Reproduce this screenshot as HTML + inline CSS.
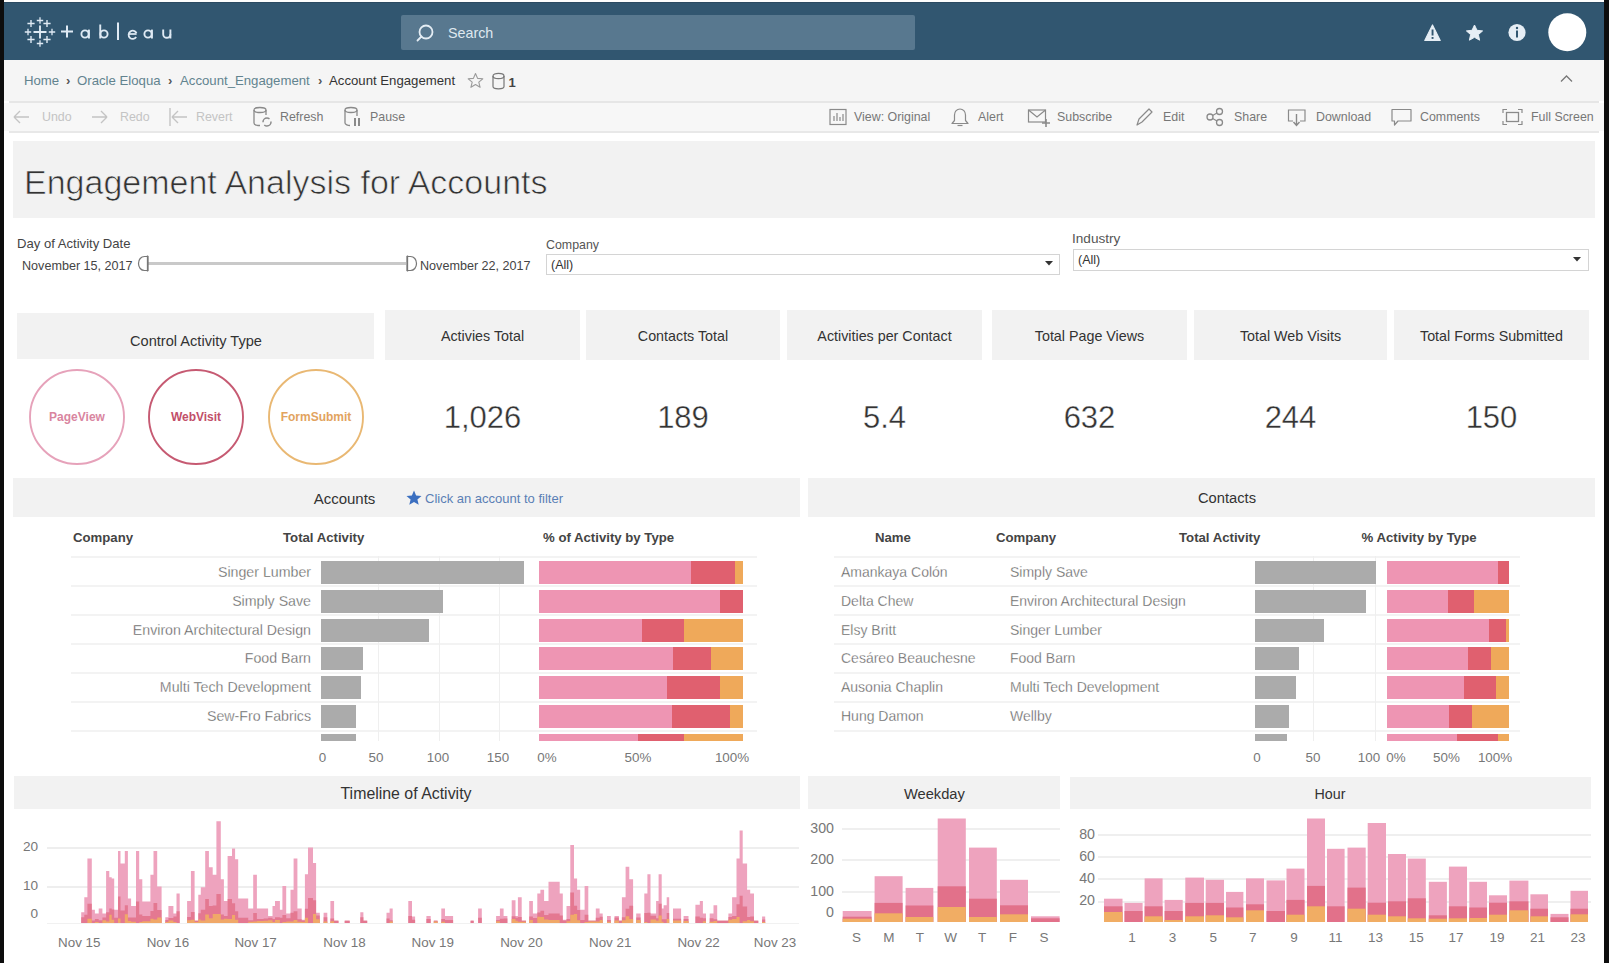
<!DOCTYPE html>
<html><head><meta charset="utf-8"><title>Engagement Analysis for Accounts</title>
<style>
html,body{margin:0;padding:0;width:1609px;height:963px;overflow:hidden;background:#fff;}
body{position:relative;font-family:'Liberation Sans', sans-serif;}
body>div{position:absolute;}
.t{white-space:nowrap;}
svg text{font-family:'Liberation Sans', sans-serif;}
</style></head><body>
<div style="left:0px;top:0px;width:1609px;height:963px;background:#ffffff;"></div>
<div style="left:4px;top:2px;width:1600px;height:58px;background:#315670;"></div>
<svg style="position:absolute;left:0;top:0" width="200" height="60" viewBox="0 0 200 60"><path d="M33.5 32H46.5M40 25.5V38.5" stroke="#dfeaf4" stroke-width="1.9" fill="none"/><path d="M36.8 20.5H43.2M40 17.3V23.7" stroke="#dfeaf4" stroke-width="1.3" fill="none"/><path d="M36.8 43.5H43.2M40 40.3V46.7" stroke="#dfeaf4" stroke-width="1.3" fill="none"/><path d="M24.8 32H31.2M28 28.8V35.2" stroke="#dfeaf4" stroke-width="1.3" fill="none"/><path d="M48.8 32H55.2M52 28.8V35.2" stroke="#dfeaf4" stroke-width="1.3" fill="none"/><path d="M27.4 23.5H34.6M31 19.9V27.1" stroke="#dfeaf4" stroke-width="1.4" fill="none"/><path d="M43.4 23.5H50.6M47 19.9V27.1" stroke="#dfeaf4" stroke-width="1.4" fill="none"/><path d="M27.4 39.5H34.6M31 35.9V43.1" stroke="#dfeaf4" stroke-width="1.4" fill="none"/><path d="M43.4 39.5H50.6M47 35.9V43.1" stroke="#dfeaf4" stroke-width="1.4" fill="none"/><path d="M61 31.5H73M67 25.5V37.5" stroke="#dfeaf4" stroke-width="2.0" fill="none"/><circle cx="85" cy="34" r="3.6" fill="none" stroke="#dfeaf4" stroke-width="1.9"/><rect x="88" y="29.6" width="1.9" height="8.9" fill="#dfeaf4"/><circle cx="104" cy="34" r="3.6" fill="none" stroke="#dfeaf4" stroke-width="1.9"/><rect x="99.3" y="24.5" width="1.9" height="14" fill="#dfeaf4"/><path d="M128.4 34H136.6" stroke="#dfeaf4" stroke-width="1.7"/><path d="M136.2 37A4.1 4.1 0 1 1 136.5 33.2" fill="none" stroke="#dfeaf4" stroke-width="1.8"/><circle cx="148" cy="34" r="3.6" fill="none" stroke="#dfeaf4" stroke-width="1.9"/><rect x="151" y="29.6" width="1.9" height="8.9" fill="#dfeaf4"/><path d="M163.2 29.5V34.2A3.6 3.6 0 0 0 170.4 34.2" fill="none" stroke="#dfeaf4" stroke-width="1.9"/><rect x="169.45" y="29.5" width="1.9" height="9" fill="#dfeaf4"/><rect x="117" y="22.5" width="2" height="17.5" fill="#dfeaf4"/></svg>
<div style="left:401px;top:15px;width:514px;height:35px;background:#58788f;border-radius:2px;"></div>
<svg style="position:absolute;left:414px;top:22px" width="22" height="22" viewBox="0 0 22 22"><circle cx="12" cy="10" r="6.5" stroke="#e4edf4" stroke-width="1.8" fill="none"/><path d="M7.5 14.5L3.5 18.5" stroke="#e4edf4" stroke-width="1.8" stroke-linecap="round"/></svg>
<div class="t" style="top:25.9px;font-size:14.3px;line-height:14.3px;color:#dfe8ef;left:448px;">Search</div>
<svg style="position:absolute;left:1420px;top:10px" width="180" height="46" viewBox="0 -10 180 46"><path d="M12.5 5L20.2 20.5H4.8Z" fill="#e6eef5" stroke="#e6eef5" stroke-width="1.2" stroke-linejoin="round"/><rect x="11.6" y="9.5" width="1.9" height="6" fill="#315670"/><rect x="11.6" y="17" width="1.9" height="1.9" fill="#315670"/><path d="M54.5 5L57 10.3L62.6 10.9L58.4 14.6L59.6 20.2L54.5 17.3L49.4 20.2L50.6 14.6L46.4 10.9L52 10.3Z" fill="#e6eef5" stroke="#e6eef5" stroke-width="1" stroke-linejoin="round"/><circle cx="97" cy="12.5" r="8.6" fill="#e6eef5"/><rect x="96" y="10.5" width="2" height="7" fill="#315670"/><circle cx="97" cy="8" r="1.2" fill="#315670"/><circle cx="147.3" cy="12.3" r="19" fill="#ffffff"/></svg>
<div style="left:4px;top:60px;width:1600px;height:41px;background:#f5f5f5;"></div>
<div style="left:9px;top:101px;width:1590px;height:2px;background:#e6e6e6;"></div>
<div class="t" style="top:73.83px;font-size:13.2px;line-height:13.2px;color:#62838f;left:24px;">Home</div>
<div class="t" style="top:74.0px;font-size:13px;line-height:13px;color:#555;font-weight:700;left:66px;">&#8250;</div>
<div class="t" style="top:73.83px;font-size:13.2px;line-height:13.2px;color:#62838f;left:77px;">Oracle Eloqua</div>
<div class="t" style="top:74.0px;font-size:13px;line-height:13px;color:#555;font-weight:700;left:168px;">&#8250;</div>
<div class="t" style="top:73.83px;font-size:13.2px;line-height:13.2px;color:#62838f;left:180px;">Account_Engagement</div>
<div class="t" style="top:74.0px;font-size:13px;line-height:13px;color:#555;font-weight:700;left:318px;">&#8250;</div>
<div class="t" style="top:73.83px;font-size:13.2px;line-height:13.2px;color:#333;left:329px;">Account Engagement</div>
<svg style="position:absolute;left:466px;top:71px" width="52" height="20" viewBox="0 0 52 20"><path d="M9.5 2.5L11.6 7.4L16.8 7.8L12.8 11.1L14.1 16.3L9.5 13.5L4.9 16.3L6.2 11.1L2.2 7.8L7.4 7.4Z" fill="none" stroke="#9a9a9a" stroke-width="1.1" stroke-linejoin="round"/><path d="M27 5V15.5C27 17 29.5 17.8 32.5 17.8S38 17 38 15.5V5" fill="none" stroke="#777" stroke-width="1.2"/><ellipse cx="32.5" cy="5" rx="5.5" ry="2.6" fill="none" stroke="#777" stroke-width="1.2"/></svg>
<div class="t" style="top:76.0px;font-size:13px;line-height:13px;color:#444;font-weight:700;left:508.5px;">1</div>
<svg style="position:absolute;left:1558px;top:73px" width="18" height="12" viewBox="0 0 18 12"><path d="M3 8.5L8.5 3L14 8.5" fill="none" stroke="#777" stroke-width="1.3"/></svg>
<div style="left:4px;top:103px;width:1600px;height:28px;background:#f7f7f7;"></div>
<div style="left:9px;top:131px;width:1590px;height:2px;background:#e8e8e8;"></div>
<div class="t" style="top:110.51px;font-size:12.4px;line-height:12.4px;color:#c4c4c4;left:42px;">Undo</div>
<div class="t" style="top:110.51px;font-size:12.4px;line-height:12.4px;color:#c4c4c4;left:120px;">Redo</div>
<div class="t" style="top:110.51px;font-size:12.4px;line-height:12.4px;color:#c4c4c4;left:196px;">Revert</div>
<div class="t" style="top:110.51px;font-size:12.4px;line-height:12.4px;color:#777777;left:280px;">Refresh</div>
<div class="t" style="top:110.51px;font-size:12.4px;line-height:12.4px;color:#777777;left:370px;">Pause</div>
<div class="t" style="top:110.51px;font-size:12.4px;line-height:12.4px;color:#777777;left:854px;">View: Original</div>
<div class="t" style="top:110.51px;font-size:12.4px;line-height:12.4px;color:#777777;left:978px;">Alert</div>
<div class="t" style="top:110.51px;font-size:12.4px;line-height:12.4px;color:#777777;left:1057px;">Subscribe</div>
<div class="t" style="top:110.51px;font-size:12.4px;line-height:12.4px;color:#777777;left:1163px;">Edit</div>
<div class="t" style="top:110.51px;font-size:12.4px;line-height:12.4px;color:#777777;left:1234px;">Share</div>
<div class="t" style="top:110.51px;font-size:12.4px;line-height:12.4px;color:#777777;left:1316px;">Download</div>
<div class="t" style="top:110.51px;font-size:12.4px;line-height:12.4px;color:#777777;left:1420px;">Comments</div>
<div class="t" style="top:110.51px;font-size:12.4px;line-height:12.4px;color:#777777;left:1531px;">Full Screen</div>
<svg style="position:absolute;left:0;top:103px" width="1609" height="28" viewBox="0 0 1609 28"><path d="M14 14H29M14 14L20 8M14 14L20 20" fill="none" stroke="#c4c4c4" stroke-width="1.4"/><path d="M92 14H107M107 14L101 8M107 14L101 20" fill="none" stroke="#c4c4c4" stroke-width="1.4"/><path d="M170 5V23M172 14H187M172 14L178 8M172 14L178 20" fill="none" stroke="#c4c4c4" stroke-width="1.4"/><path d="M254 7V20C254 21.5 257 22.5 260 22.5M266 7V12" fill="none" stroke="#8a8a8a" stroke-width="1.3"/><ellipse cx="260" cy="7" rx="6" ry="2.5" fill="none" stroke="#8a8a8a" stroke-width="1.3"/><circle cx="267" cy="19" r="4" fill="none" stroke="#8a8a8a" stroke-width="1.5" stroke-dasharray="9 3"/><path d="M345 7V20C345 21.5 348 22.5 350 22.5M357 7V13" fill="none" stroke="#8a8a8a" stroke-width="1.3"/><ellipse cx="351" cy="7" rx="6" ry="2.5" fill="none" stroke="#8a8a8a" stroke-width="1.3"/><rect x="354" y="15" width="2" height="8" fill="#8a8a8a"/><rect x="358" y="15" width="2" height="8" fill="#8a8a8a"/><rect x="830" y="6.5" width="16" height="15" fill="none" stroke="#8a8a8a" stroke-width="1.2"/><path d="M834 18V13M837 18V10M840 18V14M843 18V11" stroke="#8a8a8a" stroke-width="1.2"/><path d="M952 20.5H968L965.5 17.5V12C965.5 8.5 963 6 960 6S954.5 8.5 954.5 12V17.5Z" fill="none" stroke="#8a8a8a" stroke-width="1.2" stroke-linejoin="round"/><path d="M957.5 22.5H962.5" stroke="#8a8a8a" stroke-width="1.2"/><rect x="1028.5" y="7" width="17" height="12" fill="none" stroke="#8a8a8a" stroke-width="1.2"/><path d="M1028.5 7L1037 14L1045.5 7" fill="none" stroke="#8a8a8a" stroke-width="1.2"/><path d="M1046 16V24M1042 20H1050" stroke="#8a8a8a" stroke-width="1.6"/><path d="M1137 22L1139 16L1149 6L1152 9L1142 19Z" fill="none" stroke="#8a8a8a" stroke-width="1.2" stroke-linejoin="round"/><circle cx="1210" cy="14" r="3" fill="none" stroke="#8a8a8a" stroke-width="1.3"/><circle cx="1219.5" cy="8.5" r="3" fill="none" stroke="#8a8a8a" stroke-width="1.3"/><circle cx="1219.5" cy="19.5" r="3" fill="none" stroke="#8a8a8a" stroke-width="1.3"/><path d="M1212.6 12.5L1217 10M1212.6 15.5L1217 18" stroke="#8a8a8a" stroke-width="1.2"/><path d="M1293 18H1288.5V7H1305V18H1300" fill="none" stroke="#8a8a8a" stroke-width="1.2"/><path d="M1296.5 11V22M1293.5 19L1296.5 22.5L1299.5 19" fill="none" stroke="#8a8a8a" stroke-width="1.4"/><path d="M1392 6.5H1411V18H1398L1394.5 22V18H1392Z" fill="none" stroke="#8a8a8a" stroke-width="1.2" stroke-linejoin="round"/><rect x="1506.5" y="9.5" width="12" height="9" fill="none" stroke="#8a8a8a" stroke-width="1.3"/><path d="M1503 10V6.5H1507M1518 6.5H1522V10M1522 18V21.5H1518M1507 21.5H1503V18" fill="none" stroke="#8a8a8a" stroke-width="1.2"/></svg>
<div style="left:13px;top:141px;width:1582px;height:77px;background:#f2f2f2;"></div>
<div class="t" style="top:165.24px;font-size:34px;line-height:34px;color:#333;left:24px;-webkit-text-stroke:0.7px #f2f2f2;">Engagement Analysis for Accounts</div>
<div class="t" style="top:236.92px;font-size:13.1px;line-height:13.1px;color:#444;left:17px;">Day of Activity Date</div>
<div class="t" style="top:260.34px;font-size:12.6px;line-height:12.6px;color:#444;left:22px;">November 15, 2017</div>
<div style="left:148px;top:262px;width:258px;height:3px;background:#c9c9c9;"></div>
<svg style="position:absolute;left:136px;top:254px" width="290" height="20" viewBox="0 0 290 20"><path d="M12 2.5H8.5C5 2.5 2.5 5.5 2.5 9.5S5 16.5 8.5 16.5H12Z" fill="#fff" stroke="#777" stroke-width="1.2"/><path d="M11.5 1.5V17.5" stroke="#777" stroke-width="1.3"/><path d="M271 2.5H274.5C278 2.5 280.5 5.5 280.5 9.5S278 16.5 274.5 16.5H271Z" fill="#fff" stroke="#777" stroke-width="1.2"/><path d="M271.5 1.5V17.5" stroke="#777" stroke-width="1.3"/></svg>
<div class="t" style="top:260.34px;font-size:12.6px;line-height:12.6px;color:#444;left:420px;">November 22, 2017</div>
<div class="t" style="top:238.51px;font-size:12.4px;line-height:12.4px;color:#555;left:546px;">Company</div>
<div style="left:546px;top:254px;width:514px;height:21px;background:#fff;border:1px solid #d4d4d4;box-sizing:border-box;"></div>
<div class="t" style="top:259.43px;font-size:12.5px;line-height:12.5px;color:#333;left:551px;">(All)</div>
<svg style="position:absolute;left:1044px;top:260px" width="10" height="6"><path d="M1 1H9L5 5.5Z" fill="#333"/></svg>
<div class="t" style="top:232.49px;font-size:13.6px;line-height:13.6px;color:#555;left:1072px;">Industry</div>
<div style="left:1073px;top:249px;width:516px;height:22px;background:#fff;border:1px solid #d4d4d4;box-sizing:border-box;"></div>
<div class="t" style="top:254.43px;font-size:12.5px;line-height:12.5px;color:#333;left:1078px;">(All)</div>
<svg style="position:absolute;left:1572px;top:256px" width="10" height="6"><path d="M1 1H9L5 5.5Z" fill="#333"/></svg>
<div style="left:17px;top:313px;width:357px;height:46px;background:#f2f2f2;"></div>
<div class="t" style="top:333.65px;font-size:14.6px;line-height:14.6px;color:#333;left:-4.0px;width:400px;text-align:center;">Control Activity Type</div>
<div style="left:385px;top:310px;width:195px;height:50px;background:#f2f2f2;"></div>
<div class="t" style="top:328.9px;font-size:14.3px;line-height:14.3px;color:#333;left:282.5px;width:400px;text-align:center;">Activies Total</div>
<div class="t" style="top:401.77px;font-size:31px;line-height:31px;color:#333;left:282.5px;width:400px;text-align:center;-webkit-text-stroke:0.35px #fff;">1,026</div>
<div style="left:586px;top:310px;width:194px;height:50px;background:#f2f2f2;"></div>
<div class="t" style="top:328.9px;font-size:14.3px;line-height:14.3px;color:#333;left:483.0px;width:400px;text-align:center;">Contacts Total</div>
<div class="t" style="top:401.77px;font-size:31px;line-height:31px;color:#333;left:483.0px;width:400px;text-align:center;-webkit-text-stroke:0.35px #fff;">189</div>
<div style="left:787px;top:310px;width:195px;height:50px;background:#f2f2f2;"></div>
<div class="t" style="top:328.9px;font-size:14.3px;line-height:14.3px;color:#333;left:684.5px;width:400px;text-align:center;">Activities per Contact</div>
<div class="t" style="top:401.77px;font-size:31px;line-height:31px;color:#333;left:684.5px;width:400px;text-align:center;-webkit-text-stroke:0.35px #fff;">5.4</div>
<div style="left:992px;top:310px;width:195px;height:50px;background:#f2f2f2;"></div>
<div class="t" style="top:328.9px;font-size:14.3px;line-height:14.3px;color:#333;left:889.5px;width:400px;text-align:center;">Total Page Views</div>
<div class="t" style="top:401.77px;font-size:31px;line-height:31px;color:#333;left:889.5px;width:400px;text-align:center;-webkit-text-stroke:0.35px #fff;">632</div>
<div style="left:1194px;top:310px;width:193px;height:50px;background:#f2f2f2;"></div>
<div class="t" style="top:328.9px;font-size:14.3px;line-height:14.3px;color:#333;left:1090.5px;width:400px;text-align:center;">Total Web Visits</div>
<div class="t" style="top:401.77px;font-size:31px;line-height:31px;color:#333;left:1090.5px;width:400px;text-align:center;-webkit-text-stroke:0.35px #fff;">244</div>
<div style="left:1394px;top:310px;width:195px;height:50px;background:#f2f2f2;"></div>
<div class="t" style="top:328.9px;font-size:14.3px;line-height:14.3px;color:#333;left:1291.5px;width:400px;text-align:center;">Total Forms Submitted</div>
<div class="t" style="top:401.77px;font-size:31px;line-height:31px;color:#333;left:1291.5px;width:400px;text-align:center;-webkit-text-stroke:0.35px #fff;">150</div>
<svg style="position:absolute;left:28px;top:368px" width="98" height="98"><circle cx="49" cy="49" r="47" fill="none" stroke="#e6a2ba" stroke-width="1.9"/></svg>
<div class="t" style="top:411.35px;font-size:12px;line-height:12px;color:#d9859f;font-weight:700;left:-123.0px;width:400px;text-align:center;">PageView</div>
<svg style="position:absolute;left:147px;top:368px" width="98" height="98"><circle cx="49" cy="49" r="47" fill="none" stroke="#c65a72" stroke-width="1.9"/></svg>
<div class="t" style="top:411.35px;font-size:12px;line-height:12px;color:#c24f69;font-weight:700;left:-4.0px;width:400px;text-align:center;">WebVisit</div>
<svg style="position:absolute;left:267px;top:368px" width="98" height="98"><circle cx="49" cy="49" r="47" fill="none" stroke="#e9b873" stroke-width="1.9"/></svg>
<div class="t" style="top:411.35px;font-size:12px;line-height:12px;color:#e2a35e;font-weight:700;left:116.0px;width:400px;text-align:center;">FormSubmit</div>
<div style="left:13px;top:478px;width:787px;height:39px;background:#f2f2f2;"></div>
<div class="t" style="top:490.81px;font-size:15px;line-height:15px;color:#333;left:144.5px;width:400px;text-align:center;">Accounts</div>
<svg style="position:absolute;left:405px;top:489px" width="18" height="18" viewBox="0 0 18 18"><path d="M9 1.5L11.1 6.6L16.5 7L12.4 10.5L13.7 15.8L9 12.9L4.3 15.8L5.6 10.5L1.5 7L6.9 6.6Z" fill="#3b6fc0"/></svg>
<div class="t" style="top:492.0px;font-size:13px;line-height:13px;color:#5a7fb5;left:425px;">Click an account to filter</div>
<div style="left:808px;top:478px;width:787px;height:39px;background:#f2f2f2;"></div>
<div class="t" style="top:491.06px;font-size:14.7px;line-height:14.7px;color:#333;left:1027.0px;width:400px;text-align:center;">Contacts</div>
<div class="t" style="top:530.83px;font-size:13.2px;line-height:13.2px;color:#444;font-weight:700;left:73px;">Company</div>
<div class="t" style="top:530.83px;font-size:13.2px;line-height:13.2px;color:#444;font-weight:700;left:283px;">Total Activity</div>
<div class="t" style="top:530.83px;font-size:13.2px;line-height:13.2px;color:#444;font-weight:700;left:543px;">% of Activity by Type</div>
<div style="left:71px;top:556px;width:686px;height:185px;background:#f3f3f3;"></div>
<div style="left:71px;top:558px;width:686px;height:27px;background:#ffffff;"></div>
<div style="left:71px;top:587px;width:686px;height:27px;background:#ffffff;"></div>
<div style="left:71px;top:616px;width:686px;height:27px;background:#ffffff;"></div>
<div style="left:71px;top:645px;width:686px;height:27px;background:#ffffff;"></div>
<div style="left:71px;top:674px;width:686px;height:27px;background:#ffffff;"></div>
<div style="left:71px;top:703px;width:686px;height:27px;background:#ffffff;"></div>
<div style="left:71px;top:732px;width:686px;height:9px;background:#ffffff;"></div>
<div style="left:378px;top:556px;width:1px;height:185px;background:#efefef;"></div>
<div style="left:439px;top:556px;width:1px;height:185px;background:#efefef;"></div>
<div style="left:499px;top:556px;width:1px;height:185px;background:#efefef;"></div>
<div style="left:321px;top:561px;width:203px;height:23px;background:#ababab;"></div>
<div style="left:539px;top:561px;width:152px;height:23px;background:#ee95b3;"></div>
<div style="left:691px;top:561px;width:44px;height:23px;background:#e0606f;"></div>
<div style="left:735px;top:561px;width:8px;height:23px;background:#efa95a;"></div>
<div class="t" style="top:564.99px;font-size:14.2px;line-height:14.2px;color:#5a5a5a;left:51px;width:260px;text-align:right;-webkit-text-stroke:0.3px #fff;">Singer Lumber</div>
<div style="left:321px;top:590px;width:122px;height:23px;background:#ababab;"></div>
<div style="left:539px;top:590px;width:181px;height:23px;background:#ee95b3;"></div>
<div style="left:720px;top:590px;width:23px;height:23px;background:#e0606f;"></div>
<div style="left:743px;top:590px;width:0px;height:23px;background:#efa95a;"></div>
<div class="t" style="top:593.99px;font-size:14.2px;line-height:14.2px;color:#5a5a5a;left:51px;width:260px;text-align:right;-webkit-text-stroke:0.3px #fff;">Simply Save</div>
<div style="left:321px;top:619px;width:108px;height:23px;background:#ababab;"></div>
<div style="left:539px;top:619px;width:103px;height:23px;background:#ee95b3;"></div>
<div style="left:642px;top:619px;width:42px;height:23px;background:#e0606f;"></div>
<div style="left:684px;top:619px;width:59px;height:23px;background:#efa95a;"></div>
<div class="t" style="top:622.99px;font-size:14.2px;line-height:14.2px;color:#5a5a5a;left:51px;width:260px;text-align:right;-webkit-text-stroke:0.3px #fff;">Environ Architectural Design</div>
<div style="left:321px;top:647px;width:42px;height:23px;background:#ababab;"></div>
<div style="left:539px;top:647px;width:134px;height:23px;background:#ee95b3;"></div>
<div style="left:673px;top:647px;width:38px;height:23px;background:#e0606f;"></div>
<div style="left:711px;top:647px;width:32px;height:23px;background:#efa95a;"></div>
<div class="t" style="top:650.99px;font-size:14.2px;line-height:14.2px;color:#5a5a5a;left:51px;width:260px;text-align:right;-webkit-text-stroke:0.3px #fff;">Food Barn</div>
<div style="left:321px;top:676px;width:40px;height:23px;background:#ababab;"></div>
<div style="left:539px;top:676px;width:128px;height:23px;background:#ee95b3;"></div>
<div style="left:667px;top:676px;width:53px;height:23px;background:#e0606f;"></div>
<div style="left:720px;top:676px;width:23px;height:23px;background:#efa95a;"></div>
<div class="t" style="top:679.99px;font-size:14.2px;line-height:14.2px;color:#5a5a5a;left:51px;width:260px;text-align:right;-webkit-text-stroke:0.3px #fff;">Multi Tech Development</div>
<div style="left:321px;top:705px;width:35px;height:23px;background:#ababab;"></div>
<div style="left:539px;top:705px;width:133px;height:23px;background:#ee95b3;"></div>
<div style="left:672px;top:705px;width:58px;height:23px;background:#e0606f;"></div>
<div style="left:730px;top:705px;width:13px;height:23px;background:#efa95a;"></div>
<div class="t" style="top:708.99px;font-size:14.2px;line-height:14.2px;color:#5a5a5a;left:51px;width:260px;text-align:right;-webkit-text-stroke:0.3px #fff;">Sew-Fro Fabrics</div>
<div style="left:321px;top:734px;width:35px;height:6.5px;background:#ababab;"></div>
<div style="left:539px;top:734px;width:99px;height:6.5px;background:#ee95b3;"></div>
<div style="left:638px;top:734px;width:46px;height:6.5px;background:#e0606f;"></div>
<div style="left:684px;top:734px;width:59px;height:6.5px;background:#efa95a;"></div>
<div class="t" style="top:751.16px;font-size:13.4px;line-height:13.4px;color:#777;left:292.5px;width:60px;text-align:center;">0</div>
<div class="t" style="top:751.16px;font-size:13.4px;line-height:13.4px;color:#777;left:346.0px;width:60px;text-align:center;">50</div>
<div class="t" style="top:751.16px;font-size:13.4px;line-height:13.4px;color:#777;left:408.0px;width:60px;text-align:center;">100</div>
<div class="t" style="top:751.16px;font-size:13.4px;line-height:13.4px;color:#777;left:468.0px;width:60px;text-align:center;">150</div>
<div class="t" style="top:751.16px;font-size:13.4px;line-height:13.4px;color:#777;left:517.0px;width:60px;text-align:center;">0%</div>
<div class="t" style="top:751.16px;font-size:13.4px;line-height:13.4px;color:#777;left:608.0px;width:60px;text-align:center;">50%</div>
<div class="t" style="top:751.16px;font-size:13.4px;line-height:13.4px;color:#777;left:702.0px;width:60px;text-align:center;">100%</div>
<div class="t" style="top:530.83px;font-size:13.2px;line-height:13.2px;color:#444;font-weight:700;left:875px;">Name</div>
<div class="t" style="top:530.83px;font-size:13.2px;line-height:13.2px;color:#444;font-weight:700;left:996px;">Company</div>
<div class="t" style="top:530.83px;font-size:13.2px;line-height:13.2px;color:#444;font-weight:700;left:1179px;">Total Activity</div>
<div class="t" style="top:530.83px;font-size:13.2px;line-height:13.2px;color:#444;font-weight:700;left:1361.5px;">% Activity by Type</div>
<div style="left:834px;top:556px;width:686px;height:185px;background:#f3f3f3;"></div>
<div style="left:834px;top:558px;width:686px;height:27px;background:#ffffff;"></div>
<div style="left:834px;top:587px;width:686px;height:27px;background:#ffffff;"></div>
<div style="left:834px;top:616px;width:686px;height:27px;background:#ffffff;"></div>
<div style="left:834px;top:645px;width:686px;height:27px;background:#ffffff;"></div>
<div style="left:834px;top:674px;width:686px;height:27px;background:#ffffff;"></div>
<div style="left:834px;top:703px;width:686px;height:27px;background:#ffffff;"></div>
<div style="left:834px;top:732px;width:686px;height:9px;background:#ffffff;"></div>
<div style="left:1313px;top:556px;width:1px;height:185px;background:#efefef;"></div>
<div style="left:1375px;top:556px;width:1px;height:185px;background:#efefef;"></div>
<div style="left:1255px;top:561px;width:121px;height:23px;background:#ababab;"></div>
<div style="left:1387px;top:561px;width:111px;height:23px;background:#ee95b3;"></div>
<div style="left:1498px;top:561px;width:11px;height:23px;background:#e0606f;"></div>
<div class="t" style="top:565.16px;font-size:14px;line-height:14px;color:#5a5a5a;left:841px;-webkit-text-stroke:0.3px #fff;">Amankaya Col&oacute;n</div>
<div class="t" style="top:565.16px;font-size:14px;line-height:14px;color:#5a5a5a;left:1010px;-webkit-text-stroke:0.3px #fff;">Simply Save</div>
<div style="left:1255px;top:590px;width:111px;height:23px;background:#ababab;"></div>
<div style="left:1387px;top:590px;width:61px;height:23px;background:#ee95b3;"></div>
<div style="left:1448px;top:590px;width:26px;height:23px;background:#e0606f;"></div>
<div style="left:1474px;top:590px;width:35px;height:23px;background:#efa95a;"></div>
<div class="t" style="top:594.16px;font-size:14px;line-height:14px;color:#5a5a5a;left:841px;-webkit-text-stroke:0.3px #fff;">Delta Chew</div>
<div class="t" style="top:594.16px;font-size:14px;line-height:14px;color:#5a5a5a;left:1010px;-webkit-text-stroke:0.3px #fff;">Environ Architectural Design</div>
<div style="left:1255px;top:619px;width:69px;height:23px;background:#ababab;"></div>
<div style="left:1387px;top:619px;width:102px;height:23px;background:#ee95b3;"></div>
<div style="left:1489px;top:619px;width:17px;height:23px;background:#e0606f;"></div>
<div style="left:1506px;top:619px;width:3px;height:23px;background:#efa95a;"></div>
<div class="t" style="top:623.16px;font-size:14px;line-height:14px;color:#5a5a5a;left:841px;-webkit-text-stroke:0.3px #fff;">Elsy Britt</div>
<div class="t" style="top:623.16px;font-size:14px;line-height:14px;color:#5a5a5a;left:1010px;-webkit-text-stroke:0.3px #fff;">Singer Lumber</div>
<div style="left:1255px;top:647px;width:44px;height:23px;background:#ababab;"></div>
<div style="left:1387px;top:647px;width:81px;height:23px;background:#ee95b3;"></div>
<div style="left:1468px;top:647px;width:23px;height:23px;background:#e0606f;"></div>
<div style="left:1491px;top:647px;width:18px;height:23px;background:#efa95a;"></div>
<div class="t" style="top:651.16px;font-size:14px;line-height:14px;color:#5a5a5a;left:841px;-webkit-text-stroke:0.3px #fff;">Ces&aacute;reo Beauchesne</div>
<div class="t" style="top:651.16px;font-size:14px;line-height:14px;color:#5a5a5a;left:1010px;-webkit-text-stroke:0.3px #fff;">Food Barn</div>
<div style="left:1255px;top:676px;width:41px;height:23px;background:#ababab;"></div>
<div style="left:1387px;top:676px;width:77px;height:23px;background:#ee95b3;"></div>
<div style="left:1464px;top:676px;width:32px;height:23px;background:#e0606f;"></div>
<div style="left:1496px;top:676px;width:13px;height:23px;background:#efa95a;"></div>
<div class="t" style="top:680.16px;font-size:14px;line-height:14px;color:#5a5a5a;left:841px;-webkit-text-stroke:0.3px #fff;">Ausonia Chaplin</div>
<div class="t" style="top:680.16px;font-size:14px;line-height:14px;color:#5a5a5a;left:1010px;-webkit-text-stroke:0.3px #fff;">Multi Tech Development</div>
<div style="left:1255px;top:705px;width:34px;height:23px;background:#ababab;"></div>
<div style="left:1387px;top:705px;width:62px;height:23px;background:#ee95b3;"></div>
<div style="left:1449px;top:705px;width:23px;height:23px;background:#e0606f;"></div>
<div style="left:1472px;top:705px;width:37px;height:23px;background:#efa95a;"></div>
<div class="t" style="top:709.16px;font-size:14px;line-height:14px;color:#5a5a5a;left:841px;-webkit-text-stroke:0.3px #fff;">Hung Damon</div>
<div class="t" style="top:709.16px;font-size:14px;line-height:14px;color:#5a5a5a;left:1010px;-webkit-text-stroke:0.3px #fff;">Wellby</div>
<div style="left:1255px;top:734px;width:32px;height:6.5px;background:#ababab;"></div>
<div style="left:1387px;top:734px;width:70px;height:6.5px;background:#ee95b3;"></div>
<div style="left:1457px;top:734px;width:41px;height:6.5px;background:#e0606f;"></div>
<div style="left:1498px;top:734px;width:11px;height:6.5px;background:#efa95a;"></div>
<div class="t" style="top:751.16px;font-size:13.4px;line-height:13.4px;color:#777;left:1227.0px;width:60px;text-align:center;">0</div>
<div class="t" style="top:751.16px;font-size:13.4px;line-height:13.4px;color:#777;left:1283.0px;width:60px;text-align:center;">50</div>
<div class="t" style="top:751.16px;font-size:13.4px;line-height:13.4px;color:#777;left:1339.0px;width:60px;text-align:center;">100</div>
<div class="t" style="top:751.16px;font-size:13.4px;line-height:13.4px;color:#777;left:1366.0px;width:60px;text-align:center;">0%</div>
<div class="t" style="top:751.16px;font-size:13.4px;line-height:13.4px;color:#777;left:1416.5px;width:60px;text-align:center;">50%</div>
<div class="t" style="top:751.16px;font-size:13.4px;line-height:13.4px;color:#777;left:1465.0px;width:60px;text-align:center;">100%</div>
<div style="left:14px;top:776px;width:786px;height:33px;background:#f2f2f2;"></div>
<div class="t" style="top:786.05px;font-size:15.9px;line-height:15.9px;color:#333;left:206.0px;width:400px;text-align:center;">Timeline of Activity</div>
<div style="left:47px;top:847px;width:752px;height:2px;background:#eeeeee;"></div>
<div style="left:47px;top:886px;width:752px;height:2px;background:#eeeeee;"></div>
<div style="left:47px;top:923px;width:752px;height:1px;background:#f1f1f1;"></div>
<div class="t" style="top:840.49px;font-size:13.6px;line-height:13.6px;color:#777;left:-2px;width:40px;text-align:right;">20</div>
<div class="t" style="top:879.49px;font-size:13.6px;line-height:13.6px;color:#777;left:-2px;width:40px;text-align:right;">10</div>
<div class="t" style="top:907.49px;font-size:13.6px;line-height:13.6px;color:#777;left:-2px;width:40px;text-align:right;">0</div>
<div class="t" style="top:935.66px;font-size:13.4px;line-height:13.4px;color:#777;left:39.3px;width:80px;text-align:center;">Nov 15</div>
<div class="t" style="top:935.66px;font-size:13.4px;line-height:13.4px;color:#777;left:127.9px;width:80px;text-align:center;">Nov 16</div>
<div class="t" style="top:935.66px;font-size:13.4px;line-height:13.4px;color:#777;left:215.6px;width:80px;text-align:center;">Nov 17</div>
<div class="t" style="top:935.66px;font-size:13.4px;line-height:13.4px;color:#777;left:304.5px;width:80px;text-align:center;">Nov 18</div>
<div class="t" style="top:935.66px;font-size:13.4px;line-height:13.4px;color:#777;left:392.8px;width:80px;text-align:center;">Nov 19</div>
<div class="t" style="top:935.66px;font-size:13.4px;line-height:13.4px;color:#777;left:481.4px;width:80px;text-align:center;">Nov 20</div>
<div class="t" style="top:935.66px;font-size:13.4px;line-height:13.4px;color:#777;left:570.2px;width:80px;text-align:center;">Nov 21</div>
<div class="t" style="top:935.66px;font-size:13.4px;line-height:13.4px;color:#777;left:658.6px;width:80px;text-align:center;">Nov 22</div>
<div class="t" style="top:935.66px;font-size:13.4px;line-height:13.4px;color:#777;left:735.0px;width:80px;text-align:center;">Nov 23</div>
<svg style="position:absolute;left:0;top:800px" width="810" height="130" viewBox="0 800 810 130"><path d="M81.2 923V912.2H84.3V923ZM84.3 923V897.2H87.4V923ZM87.4 923V858.6H91.8V923ZM91.8 923V909.7H94.9V923ZM94.9 923V913.4H98.7V923ZM98.7 923V908.4H102.4V923ZM102.4 923V913.4H106.1V923ZM106.1 923V871.1H109.3V923ZM109.3 923V877.3H111.7V923ZM111.7 923V878.5H114.2V923ZM114.2 923V909.7H118.0V923ZM118.0 923V851.1H120.5V923ZM120.5 923V863.6H124.8V923ZM124.8 923V851.1H127.9V923ZM127.9 923V898.5H131.1V923ZM131.1 923V906.0H136.0V923ZM136.0 923V851.1H139.2V923ZM139.2 923V879.2H142.3V923ZM142.3 923V901.6H150.4V923ZM150.4 923V874.8H153.5V923ZM153.5 923V851.1H157.2V923ZM157.2 923V886.6H161.6V923ZM165.3 923V917.2H168.4V923ZM168.4 923V906.0H173.4V923ZM173.4 923V913.4H176.5V923ZM176.5 923V893.5H179.7V923ZM187.1 923V901.0H190.9V923ZM190.9 923V871.1H194.6V923ZM194.6 923V920.9H198.3V923ZM198.3 923V894.7H200.8V923ZM200.8 923V887.3H205.2V923ZM205.2 923V851.1H208.9V923ZM208.9 923V867.3H212.7V923ZM212.7 923V874.8H216.4V923ZM216.4 923V821.2H220.8V923ZM220.8 923V879.2H223.9V923ZM223.9 923V901.0H227.6V923ZM227.6 923V856.1H232.0V923ZM232.0 923V848.6H235.1V923ZM235.1 923V859.2H238.2V923ZM238.2 923V898.5H248.2V923ZM248.2 923V908.4H253.2V923ZM253.2 923V874.8H256.9V923ZM256.9 923V908.4H264.4V923ZM260.0 923V909.7H263.7V923ZM263.7 923V908.4H268.1V923ZM268.1 923V915.9H272.5V923ZM272.5 923V906.0H275.0V923ZM275.0 923V901.0H279.9V923ZM279.9 923V909.7H282.4V923ZM282.4 923V886.0H286.2V923ZM286.2 923V913.4H290.5V923ZM290.5 923V889.8H293.6V923ZM293.6 923V858.6H297.4V923ZM297.4 923V908.4H301.7V923ZM301.7 923V919.7H304.9V923ZM304.9 923V874.2H308.0V923ZM308.0 923V847.4H313.0V923ZM313.0 923V863.0H316.1V923ZM316.1 923V912.8H319.8V923ZM323.6 923V912.8H327.3V923ZM330.4 923V901.0H334.1V923ZM334.1 923V920.9H338.5V923ZM344.7 923V920.9H349.7V923ZM360.3 923V912.2H363.4V923ZM363.4 923V920.9H367.2V923ZM386.5 923V912.8H389.6V923ZM389.6 923V908.4H392.7V923ZM408.3 923V901.0H412.0V923ZM412.0 923V916.5H415.1V923ZM426.4 923V915.9H430.7V923ZM433.8 923V920.9H437.6V923ZM441.3 923V908.4H445.0V923ZM445.0 923V915.9H453.1V923ZM470.6 923V920.9H473.7V923ZM478.1 923V908.4H481.8V923ZM496.1 923V915.9H499.9V923ZM499.9 923V908.4H503.6V923ZM503.6 923V915.9H507.4V923ZM511.7 923V900.3H515.5V923ZM515.5 923V915.9H517.9V923ZM517.9 923V897.2H521.7V923ZM521.7 923V920.9H526.0V923ZM529.2 923V901.0H532.9V923ZM532.9 923V913.4H537.3V923ZM537.3 923V893.5H540.4V923ZM540.4 923V889.8H544.1V923ZM544.1 923V901.0H548.5V923ZM548.5 923V881.7H559.7V923ZM559.7 923V893.5H562.8V923ZM562.8 923V919.7H566.5V923ZM566.5 923V906.0H570.3V923ZM570.3 923V844.9H574.0V923ZM574.0 923V878.5H577.1V923ZM577.1 923V889.8H580.2V923ZM580.2 923V909.7H584.6V923ZM584.6 923V886.0H588.3V923ZM588.3 923V920.9H595.8V923ZM595.8 923V908.4H599.6V923ZM599.6 923V913.4H602.7V923ZM607.0 923V915.9H610.8V923ZM614.5 923V915.9H618.9V923ZM618.9 923V920.9H622.0V923ZM621.9 923V897.2H625.6V923ZM625.6 923V866.7H629.3V923ZM629.3 923V879.2H633.1V923ZM636.2 923V913.4H640.6V923ZM644.3 923V893.5H647.4V923ZM647.4 923V874.2H650.5V923ZM650.5 923V913.4H656.1V923ZM656.1 923V901.0H658.6V923ZM658.6 923V874.2H661.7V923ZM661.7 923V908.4H663.6V923ZM663.6 923V905.3H666.7V923ZM666.7 923V897.2H669.2V923ZM673.0 923V908.4H681.1V923ZM683.6 923V915.9H688.5V923ZM695.4 923V904.7H699.8V923ZM699.8 923V901.0H702.9V923ZM702.9 923V913.4H706.0V923ZM709.7 923V913.4H713.5V923ZM713.5 923V905.3H717.2V923ZM717.2 923V920.9H728.4V923ZM728.4 923V913.4H732.1V923ZM732.1 923V897.2H736.5V923ZM736.5 923V858.6H739.6V923ZM739.6 923V830.6H742.7V923ZM742.7 923V863.6H747.1V923ZM747.1 923V889.8H750.2V923ZM750.2 923V893.5H754.0V923ZM754.0 923V920.9H758.3V923ZM762.1 923V916.5H765.2V923Z" fill="#eea3be"/><path d="M81.2 923V917.3H84.3V923ZM84.3 923V914.7H87.4V923ZM87.4 923V903.8H91.8V923ZM91.8 923V920.4H94.9V923ZM94.9 923V919.0H98.7V923ZM98.7 923V920.2H102.4V923ZM102.4 923V917.5H106.1V923ZM106.1 923V912.2H109.3V923ZM109.3 923V908.5H111.7V923ZM111.7 923V909.4H114.2V923ZM114.2 923V917.7H118.0V923ZM118.0 923V896.5H120.5V923ZM120.5 923V910.4H124.8V923ZM124.8 923V905.2H127.9V923ZM127.9 923V917.6H131.1V923ZM131.1 923V917.5H136.0V923ZM136.0 923V901.4H139.2V923ZM139.2 923V914.5H142.3V923ZM142.3 923V915.9H150.4V923ZM150.4 923V911.0H153.5V923ZM153.5 923V902.9H157.2V923ZM157.2 923V910.1H161.6V923ZM165.3 923V920.1H168.4V923ZM168.4 923V918.0H173.4V923ZM173.4 923V916.4H176.5V923ZM176.5 923V911.3H179.7V923ZM187.1 923V917.0H190.9V923ZM190.9 923V911.9H194.6V923ZM194.6 923V920.5H198.3V923ZM198.3 923V913.2H200.8V923ZM200.8 923V909.7H205.2V923ZM205.2 923V899.1H208.9V923ZM208.9 923V905.9H212.7V923ZM212.7 923V905.4H216.4V923ZM216.4 923V894.1H220.8V923ZM220.8 923V914.5H223.9V923ZM223.9 923V915.9H227.6V923ZM227.6 923V898.9H232.0V923ZM232.0 923V903.3H235.1V923ZM235.1 923V911.2H238.2V923ZM238.2 923V917.7H248.2V923ZM248.2 923V920.2H253.2V923ZM253.2 923V913.0H256.9V923ZM256.9 923V919.1H264.4V923ZM260.0 923V920.4H263.7V923ZM263.7 923V918.6H268.1V923ZM268.1 923V917.8H272.5V923ZM272.5 923V918.9H275.0V923ZM275.0 923V917.3H279.9V923ZM279.9 923V917.8H282.4V923ZM282.4 923V914.9H286.2V923ZM286.2 923V918.3H290.5V923ZM290.5 923V912.7H293.6V923ZM293.6 923V911.3H297.4V923ZM297.4 923V919.2H301.7V923ZM301.7 923V920.4H304.9V923ZM304.9 923V908.7H308.0V923ZM308.0 923V898.1H313.0V923ZM313.0 923V900.3H316.1V923ZM316.1 923V915.4H319.8V923ZM323.6 923V917.3H327.3V923ZM330.4 923V918.5H334.1V923ZM334.1 923V920.5H338.5V923ZM344.7 923V920.5H349.7V923ZM360.3 923V917.2H363.4V923ZM363.4 923V920.5H367.2V923ZM386.5 923V918.5H389.6V923ZM389.6 923V920.3H392.7V923ZM408.3 923V916.1H412.0V923ZM412.0 923V919.8H415.1V923ZM426.4 923V919.1H430.7V923ZM433.8 923V920.5H437.6V923ZM441.3 923V918.9H445.0V923ZM445.0 923V919.9H453.1V923ZM470.6 923V920.5H473.7V923ZM478.1 923V917.7H481.8V923ZM496.1 923V920.1H499.9V923ZM499.9 923V918.7H503.6V923ZM503.6 923V918.6H507.4V923ZM511.7 923V916.3H515.5V923ZM515.5 923V917.7H517.9V923ZM517.9 923V916.9H521.7V923ZM521.7 923V920.5H526.0V923ZM529.2 923V916.5H532.9V923ZM532.9 923V917.9H537.3V923ZM537.3 923V912.4H540.4V923ZM540.4 923V910.8H544.1V923ZM544.1 923V915.1H548.5V923ZM548.5 923V913.5H559.7V923ZM559.7 923V915.4H562.8V923ZM562.8 923V920.5H566.5V923ZM566.5 923V919.0H570.3V923ZM570.3 923V892.5H574.0V923ZM574.0 923V905.8H577.1V923ZM577.1 923V910.0H580.2V923ZM580.2 923V920.0H584.6V923ZM584.6 923V914.7H588.3V923ZM588.3 923V920.5H595.8V923ZM595.8 923V917.7H599.6V923ZM599.6 923V916.7H602.7V923ZM607.0 923V919.9H610.8V923ZM614.5 923V917.6H618.9V923ZM618.9 923V920.5H622.0V923ZM621.9 923V917.3H625.6V923ZM625.6 923V908.7H629.3V923ZM629.3 923V905.7H633.1V923ZM636.2 923V917.6H640.6V923ZM644.3 923V913.0H647.4V923ZM647.4 923V912.8H650.5V923ZM650.5 923V915.7H656.1V923ZM656.1 923V918.3H658.6V923ZM658.6 923V903.7H661.7V923ZM661.7 923V919.3H663.6V923ZM663.6 923V919.3H666.7V923ZM666.7 923V912.9H669.2V923ZM673.0 923V918.7H681.1V923ZM683.6 923V918.9H688.5V923ZM695.4 923V916.4H699.8V923ZM699.8 923V917.8H702.9V923ZM702.9 923V918.2H706.0V923ZM709.7 923V918.2H713.5V923ZM713.5 923V919.3H717.2V923ZM717.2 923V920.5H728.4V923ZM728.4 923V916.9H732.1V923ZM732.1 923V916.0H736.5V923ZM736.5 923V904.3H739.6V923ZM739.6 923V895.7H742.7V923ZM742.7 923V906.6H747.1V923ZM747.1 923V917.0H750.2V923ZM750.2 923V916.6H754.0V923ZM754.0 923V920.5H758.3V923ZM762.1 923V919.6H765.2V923Z" fill="#e2718a" fill-opacity="0.85"/><path d="M87.4 923V918.8H91.8V923ZM94.9 923V922.0H98.7V923ZM102.4 923V920.3H106.1V923ZM106.1 923V921.6H109.3V923ZM109.3 923V914.7H111.7V923ZM111.7 923V919.8H114.2V923ZM118.0 923V918.4H120.5V923ZM124.8 923V914.3H127.9V923ZM127.9 923V921.1H131.1V923ZM131.1 923V921.8H136.0V923ZM139.2 923V922.0H142.3V923ZM142.3 923V921.2H150.4V923ZM150.4 923V918.8H153.5V923ZM153.5 923V919.4H157.2V923ZM157.2 923V917.6H161.6V923ZM165.3 923V922.0H168.4V923ZM168.4 923V920.4H173.4V923ZM173.4 923V921.9H176.5V923ZM187.1 923V920.3H190.9V923ZM190.9 923V919.7H194.6V923ZM194.6 923V922.0H198.3V923ZM198.3 923V919.6H200.8V923ZM200.8 923V920.5H205.2V923ZM205.2 923V914.5H208.9V923ZM208.9 923V918.3H212.7V923ZM212.7 923V914.0H216.4V923ZM216.4 923V914.0H220.8V923ZM220.8 923V919.4H223.9V923ZM223.9 923V918.8H227.6V923ZM227.6 923V918.9H232.0V923ZM232.0 923V915.1H235.1V923ZM235.1 923V919.7H238.2V923ZM248.2 923V921.7H253.2V923ZM253.2 923V921.5H256.9V923ZM256.9 923V921.0H264.4V923ZM263.7 923V920.7H268.1V923ZM268.1 923V920.3H272.5V923ZM272.5 923V922.0H275.0V923ZM275.0 923V920.0H279.9V923ZM282.4 923V921.9H286.2V923ZM286.2 923V921.6H290.5V923ZM290.5 923V921.4H293.6V923ZM293.6 923V920.1H297.4V923ZM297.4 923V921.7H301.7V923ZM301.7 923V921.9H304.9V923ZM304.9 923V917.7H308.0V923ZM313.0 923V914.0H316.1V923ZM316.1 923V919.3H319.8V923ZM323.6 923V921.6H327.3V923ZM330.4 923V921.3H334.1V923ZM389.6 923V921.6H392.7V923ZM433.8 923V921.5H437.6V923ZM441.3 923V921.8H445.0V923ZM496.1 923V921.3H499.9V923ZM511.7 923V919.1H515.5V923ZM515.5 923V920.8H517.9V923ZM517.9 923V921.7H521.7V923ZM521.7 923V921.8H526.0V923ZM529.2 923V919.9H532.9V923ZM537.3 923V916.7H540.4V923ZM540.4 923V917.1H544.1V923ZM544.1 923V919.5H548.5V923ZM548.5 923V920.0H559.7V923ZM566.5 923V921.3H570.3V923ZM570.3 923V914.8H574.0V923ZM574.0 923V914.0H577.1V923ZM577.1 923V920.2H580.2V923ZM584.6 923V922.0H588.3V923ZM588.3 923V921.6H595.8V923ZM595.8 923V921.5H599.6V923ZM599.6 923V920.0H602.7V923ZM607.0 923V921.8H610.8V923ZM614.5 923V920.5H618.9V923ZM621.9 923V920.3H625.6V923ZM625.6 923V916.2H629.3V923ZM629.3 923V918.9H633.1V923ZM636.2 923V920.0H640.6V923ZM644.3 923V922.0H647.4V923ZM650.5 923V919.5H656.1V923ZM656.1 923V920.7H658.6V923ZM658.6 923V915.4H661.7V923ZM661.7 923V921.8H663.6V923ZM666.7 923V919.0H669.2V923ZM673.0 923V920.6H681.1V923ZM683.6 923V920.9H688.5V923ZM702.9 923V921.3H706.0V923ZM709.7 923V921.8H713.5V923ZM713.5 923V921.0H717.2V923ZM728.4 923V919.7H732.1V923ZM732.1 923V919.1H736.5V923ZM736.5 923V917.0H739.6V923ZM742.7 923V921.2H747.1V923ZM747.1 923V920.1H750.2V923ZM750.2 923V921.2H754.0V923ZM762.1 923V921.9H765.2V923Z" fill="#f1ad64" fill-opacity="0.9"/></svg>
<div style="left:1070px;top:777px;width:521px;height:32px;background:#f2f2f2;"></div>
<div style="left:1098px;top:834px;width:493px;height:2px;background:#efefef;"></div>
<div style="left:1098px;top:856px;width:493px;height:2px;background:#efefef;"></div>
<div style="left:1098px;top:878px;width:493px;height:2px;background:#efefef;"></div>
<div style="left:1098px;top:901px;width:493px;height:2px;background:#efefef;"></div>
<div style="left:808px;top:776px;width:252px;height:33px;background:#f2f2f2;"></div>
<div class="t" style="top:786.56px;font-size:14.7px;line-height:14.7px;color:#333;left:734.4px;width:400px;text-align:center;">Weekday</div>
<div style="left:842px;top:828px;width:218px;height:2px;background:#efefef;"></div>
<div style="left:842px;top:859px;width:218px;height:2px;background:#efefef;"></div>
<div style="left:842px;top:891px;width:218px;height:2px;background:#efefef;"></div>
<div class="t" style="top:820.99px;font-size:14.2px;line-height:14.2px;color:#777;left:794px;width:40px;text-align:right;">300</div>
<div class="t" style="top:851.99px;font-size:14.2px;line-height:14.2px;color:#777;left:794px;width:40px;text-align:right;">200</div>
<div class="t" style="top:883.99px;font-size:14.2px;line-height:14.2px;color:#777;left:794px;width:40px;text-align:right;">100</div>
<div class="t" style="top:904.99px;font-size:14.2px;line-height:14.2px;color:#777;left:794px;width:40px;text-align:right;">0</div>
<svg style="position:absolute;left:0;top:0" width="1609" height="963"><rect x="842.7" y="911" width="28.9" height="11.0" fill="#eea3be"/><rect x="842.7" y="916.7" width="28.9" height="5.3" fill="#e2718a"/><rect x="842.7" y="918.7" width="28.9" height="3.3" fill="#f1ad64"/><rect x="874.6" y="876.2" width="28.0" height="45.8" fill="#eea3be"/><rect x="874.6" y="902.9" width="28.0" height="19.1" fill="#e2718a"/><rect x="874.6" y="913.3" width="28.0" height="8.7" fill="#f1ad64"/><rect x="905.6" y="887.9" width="27.7" height="34.1" fill="#eea3be"/><rect x="905.6" y="905.5" width="27.7" height="16.5" fill="#e2718a"/><rect x="905.6" y="917" width="27.7" height="5.0" fill="#f1ad64"/><rect x="937.7" y="818.5" width="28.1" height="103.5" fill="#eea3be"/><rect x="937.7" y="886.3" width="28.1" height="35.7" fill="#e2718a"/><rect x="937.7" y="907" width="28.1" height="15.0" fill="#f1ad64"/><rect x="969" y="847.6" width="27.8" height="74.4" fill="#eea3be"/><rect x="969" y="898.7" width="27.8" height="23.3" fill="#e2718a"/><rect x="969" y="917" width="27.8" height="5.0" fill="#f1ad64"/><rect x="1000" y="879.8" width="28.0" height="42.2" fill="#eea3be"/><rect x="1000" y="905.3" width="28.0" height="16.7" fill="#e2718a"/><rect x="1000" y="914.3" width="28.0" height="7.7" fill="#f1ad64"/><rect x="1031" y="916.3" width="28.6" height="5.7" fill="#eea3be"/><rect x="1031" y="918.3" width="28.6" height="3.7" fill="#e2718a"/><rect x="1104" y="898.7" width="18.5" height="23.3" fill="#eea3be"/><rect x="1104" y="906.3" width="18.5" height="15.7" fill="#e2718a"/><rect x="1104" y="912" width="18.5" height="10.0" fill="#f1ad64"/><rect x="1124.5" y="902.9" width="18.1" height="19.1" fill="#eea3be"/><rect x="1124.5" y="911" width="18.1" height="11.0" fill="#e2718a"/><rect x="1144.6" y="878.4" width="18.0" height="43.6" fill="#eea3be"/><rect x="1144.6" y="906.3" width="18.0" height="15.7" fill="#e2718a"/><rect x="1144.6" y="916.3" width="18.0" height="5.7" fill="#f1ad64"/><rect x="1164.6" y="899.9" width="18.1" height="22.1" fill="#eea3be"/><rect x="1164.6" y="911" width="18.1" height="11.0" fill="#e2718a"/><rect x="1164.6" y="920" width="18.1" height="2.0" fill="#f1ad64"/><rect x="1185.3" y="877.6" width="18.7" height="44.4" fill="#eea3be"/><rect x="1185.3" y="902.9" width="18.7" height="19.1" fill="#e2718a"/><rect x="1185.3" y="916.3" width="18.7" height="5.7" fill="#f1ad64"/><rect x="1205.7" y="879.8" width="18.3" height="42.2" fill="#eea3be"/><rect x="1205.7" y="902.9" width="18.3" height="19.1" fill="#e2718a"/><rect x="1205.7" y="915.3" width="18.3" height="6.7" fill="#f1ad64"/><rect x="1226" y="891.9" width="17.4" height="30.1" fill="#eea3be"/><rect x="1226" y="907.5" width="17.4" height="14.5" fill="#e2718a"/><rect x="1226" y="917.3" width="17.4" height="4.7" fill="#f1ad64"/><rect x="1246" y="878.4" width="18.0" height="43.6" fill="#eea3be"/><rect x="1246" y="904.3" width="18.0" height="17.7" fill="#e2718a"/><rect x="1246" y="910.3" width="18.0" height="11.7" fill="#f1ad64"/><rect x="1266.5" y="880.4" width="18.5" height="41.6" fill="#eea3be"/><rect x="1266.5" y="911" width="18.5" height="11.0" fill="#e2718a"/><rect x="1286.5" y="868.6" width="18.0" height="53.4" fill="#eea3be"/><rect x="1286.5" y="899.9" width="18.0" height="22.1" fill="#e2718a"/><rect x="1286.5" y="914.7" width="18.0" height="7.3" fill="#f1ad64"/><rect x="1307" y="818.5" width="18.0" height="103.5" fill="#eea3be"/><rect x="1307" y="885.9" width="18.0" height="36.1" fill="#e2718a"/><rect x="1307" y="906.3" width="18.0" height="15.7" fill="#f1ad64"/><rect x="1327" y="848.8" width="17.6" height="73.2" fill="#eea3be"/><rect x="1327" y="906.3" width="17.6" height="15.7" fill="#e2718a"/><rect x="1347.5" y="847.6" width="18.2" height="74.4" fill="#eea3be"/><rect x="1347.5" y="887.6" width="18.2" height="34.4" fill="#e2718a"/><rect x="1347.5" y="908.7" width="18.2" height="13.3" fill="#f1ad64"/><rect x="1367.7" y="823" width="18.3" height="99.0" fill="#eea3be"/><rect x="1367.7" y="902.7" width="18.3" height="19.3" fill="#e2718a"/><rect x="1367.7" y="914.7" width="18.3" height="7.3" fill="#f1ad64"/><rect x="1388" y="854" width="18.0" height="68.0" fill="#eea3be"/><rect x="1388" y="901.3" width="18.0" height="20.7" fill="#e2718a"/><rect x="1388" y="916.3" width="18.0" height="5.7" fill="#f1ad64"/><rect x="1407.8" y="858.6" width="18.0" height="63.4" fill="#eea3be"/><rect x="1407.8" y="898.3" width="18.0" height="23.7" fill="#e2718a"/><rect x="1407.8" y="918.3" width="18.0" height="3.7" fill="#f1ad64"/><rect x="1428.8" y="881.8" width="18.1" height="40.2" fill="#eea3be"/><rect x="1428.8" y="915.3" width="18.1" height="6.7" fill="#e2718a"/><rect x="1428.8" y="918.7" width="18.1" height="3.3" fill="#f1ad64"/><rect x="1448.9" y="866.6" width="18.1" height="55.4" fill="#eea3be"/><rect x="1448.9" y="906.3" width="18.1" height="15.7" fill="#e2718a"/><rect x="1448.9" y="918.3" width="18.1" height="3.7" fill="#f1ad64"/><rect x="1469.3" y="881.8" width="17.7" height="40.2" fill="#eea3be"/><rect x="1469.3" y="907.5" width="17.7" height="14.5" fill="#e2718a"/><rect x="1469.3" y="918" width="17.7" height="4.0" fill="#f1ad64"/><rect x="1489" y="895.3" width="18.0" height="26.7" fill="#eea3be"/><rect x="1489" y="902.7" width="18.0" height="19.3" fill="#e2718a"/><rect x="1489" y="914.7" width="18.0" height="7.3" fill="#f1ad64"/><rect x="1509.4" y="880.6" width="19.0" height="41.4" fill="#eea3be"/><rect x="1509.4" y="901.3" width="19.0" height="20.7" fill="#e2718a"/><rect x="1509.4" y="910.3" width="19.0" height="11.7" fill="#f1ad64"/><rect x="1530.4" y="894.3" width="17.6" height="27.7" fill="#eea3be"/><rect x="1530.4" y="908.7" width="17.6" height="13.3" fill="#e2718a"/><rect x="1530.4" y="916.3" width="17.6" height="5.7" fill="#f1ad64"/><rect x="1550.5" y="913.9" width="18.0" height="8.1" fill="#eea3be"/><rect x="1550.5" y="917.3" width="18.0" height="4.7" fill="#e2718a"/><rect x="1570.5" y="890.8" width="17.5" height="31.2" fill="#eea3be"/><rect x="1570.5" y="908.7" width="17.5" height="13.3" fill="#e2718a"/><rect x="1570.5" y="914.3" width="17.5" height="7.7" fill="#f1ad64"/></svg>
<div class="t" style="top:930.58px;font-size:13.5px;line-height:13.5px;color:#777;left:841.5px;width:30px;text-align:center;">S</div>
<div class="t" style="top:930.58px;font-size:13.5px;line-height:13.5px;color:#777;left:873.8px;width:30px;text-align:center;">M</div>
<div class="t" style="top:930.58px;font-size:13.5px;line-height:13.5px;color:#777;left:904.9px;width:30px;text-align:center;">T</div>
<div class="t" style="top:930.58px;font-size:13.5px;line-height:13.5px;color:#777;left:935.7px;width:30px;text-align:center;">W</div>
<div class="t" style="top:930.58px;font-size:13.5px;line-height:13.5px;color:#777;left:967.0px;width:30px;text-align:center;">T</div>
<div class="t" style="top:930.58px;font-size:13.5px;line-height:13.5px;color:#777;left:997.9px;width:30px;text-align:center;">F</div>
<div class="t" style="top:930.58px;font-size:13.5px;line-height:13.5px;color:#777;left:1029.0px;width:30px;text-align:center;">S</div>
<div class="t" style="top:786.9px;font-size:14.3px;line-height:14.3px;color:#333;left:1130.0px;width:400px;text-align:center;">Hour</div>
<div class="t" style="top:826.99px;font-size:14.2px;line-height:14.2px;color:#777;left:1055px;width:40px;text-align:right;">80</div>
<div class="t" style="top:848.99px;font-size:14.2px;line-height:14.2px;color:#777;left:1055px;width:40px;text-align:right;">60</div>
<div class="t" style="top:870.99px;font-size:14.2px;line-height:14.2px;color:#777;left:1055px;width:40px;text-align:right;">40</div>
<div class="t" style="top:892.99px;font-size:14.2px;line-height:14.2px;color:#777;left:1055px;width:40px;text-align:right;">20</div>
<div class="t" style="top:930.58px;font-size:13.5px;line-height:13.5px;color:#777;left:1117.0px;width:30px;text-align:center;">1</div>
<div class="t" style="top:930.58px;font-size:13.5px;line-height:13.5px;color:#777;left:1157.6px;width:30px;text-align:center;">3</div>
<div class="t" style="top:930.58px;font-size:13.5px;line-height:13.5px;color:#777;left:1198.3px;width:30px;text-align:center;">5</div>
<div class="t" style="top:930.58px;font-size:13.5px;line-height:13.5px;color:#777;left:1237.8px;width:30px;text-align:center;">7</div>
<div class="t" style="top:930.58px;font-size:13.5px;line-height:13.5px;color:#777;left:1279.0px;width:30px;text-align:center;">9</div>
<div class="t" style="top:930.58px;font-size:13.5px;line-height:13.5px;color:#777;left:1320.5px;width:30px;text-align:center;">11</div>
<div class="t" style="top:930.58px;font-size:13.5px;line-height:13.5px;color:#777;left:1360.6px;width:30px;text-align:center;">13</div>
<div class="t" style="top:930.58px;font-size:13.5px;line-height:13.5px;color:#777;left:1401.3px;width:30px;text-align:center;">15</div>
<div class="t" style="top:930.58px;font-size:13.5px;line-height:13.5px;color:#777;left:1441.0px;width:30px;text-align:center;">17</div>
<div class="t" style="top:930.58px;font-size:13.5px;line-height:13.5px;color:#777;left:1482.0px;width:30px;text-align:center;">19</div>
<div class="t" style="top:930.58px;font-size:13.5px;line-height:13.5px;color:#777;left:1522.5px;width:30px;text-align:center;">21</div>
<div class="t" style="top:930.58px;font-size:13.5px;line-height:13.5px;color:#777;left:1563.0px;width:30px;text-align:center;">23</div>
<div style="left:0px;top:0px;width:4px;height:963px;background:#0d0d0d;"></div>
<div style="left:1604px;top:0px;width:5px;height:963px;background:#0d0d0d;"></div>
<div style="left:4px;top:0px;width:1600px;height:2px;background:#fdfdfd;"></div>
<div style="left:4px;top:2px;width:1600px;height:1px;background:#2b4a62;"></div>
</body></html>
